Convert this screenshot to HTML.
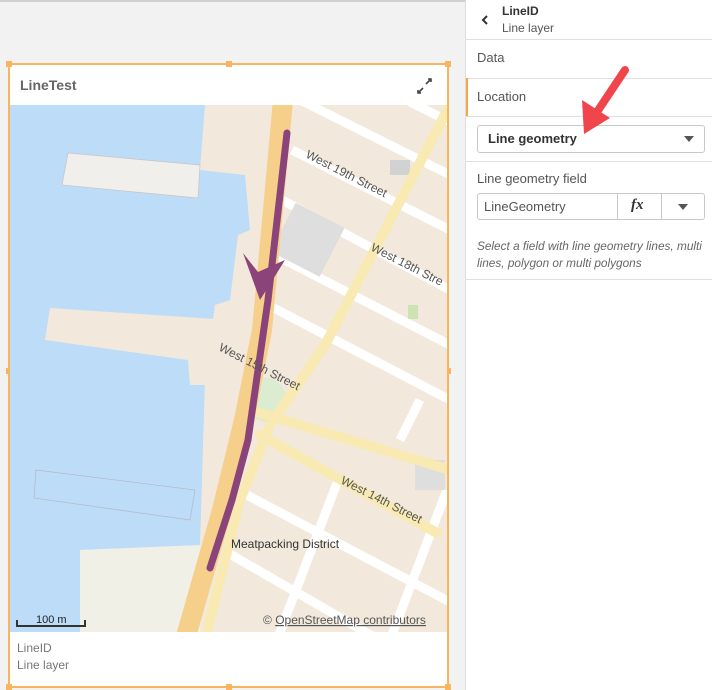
<!DOCTYPE html>
<html><head><style>
*{margin:0;padding:0;box-sizing:border-box}
body{width:712px;height:690px;background:#f2f2f2;font-family:"Liberation Sans",sans-serif;position:relative;overflow:hidden}
.abs{position:absolute}
.panel{left:465px;top:0;width:247px;height:690px;background:#fff;border-left:1px solid #ddd}
.t{position:absolute;font-size:13px;color:#404040}
.hr{position:absolute;left:0;width:247px;height:1px;background:#e0e0e0}
</style></head><body>
<div class="abs" style="left:0;top:0;width:712px;height:2px;background:#d0d0d0"></div>
<div class="abs" style="left:8px;top:63px;width:441px;height:625px;border:2px solid #f9b45e;background:#fff"></div>
<div class="abs" style="left:6px;top:61px;width:6px;height:6px;background:#f9b45e"></div>
<div class="abs" style="left:226px;top:61px;width:6px;height:6px;background:#f9b45e"></div>
<div class="abs" style="left:445px;top:61px;width:6px;height:6px;background:#f9b45e"></div>
<div class="abs" style="left:6px;top:368px;width:6px;height:6px;background:#f9b45e"></div>
<div class="abs" style="left:445px;top:368px;width:6px;height:6px;background:#f9b45e"></div>
<div class="abs" style="left:6px;top:684px;width:6px;height:6px;background:#f9b45e"></div>
<div class="abs" style="left:226px;top:684px;width:6px;height:6px;background:#f9b45e"></div>
<div class="abs" style="left:445px;top:684px;width:6px;height:6px;background:#f9b45e"></div>
<div class="abs" style="left:20px;top:77px;font-size:14px;font-weight:bold;color:#666">LineTest</div>
<svg class="abs" style="left:415px;top:77px" width="20" height="18"><path d="M11 7l5-5M13 2h3v3M8 11l-5 5M3 13v3h3" stroke="#444" stroke-width="1.6" fill="none"/></svg>
<svg class="abs" style="left:0;top:0" width="712" height="690">
<defs><clipPath id="c"><rect x="10" y="105" width="437" height="527"/></clipPath></defs>
<g clip-path="url(#c)">
<rect x="10" y="105" width="437" height="527" fill="#f2e9dc"/>
<polygon points="10,105 205,105 200,170 245,175 250,230 238,235 230,300 215,305 205,380 200,545 80,550 80,632 10,632" fill="#bcdcf7"/>
<polygon points="68,153 200,165 198,198 62,185" fill="#f1efeb" stroke="#c9c3c6" stroke-width="0.7"/>
<polygon points="50,308 230,320 215,385 190,385 188,360 45,340" fill="#f2e9dc"/>
<polygon points="36,470 195,490 190,520 34,498" fill="none" stroke="#b9b4c6" stroke-width="0.7"/>
<polygon points="80,550 205,545 200,632 80,632" fill="#f1f0e6"/>
<g stroke="#fff" stroke-width="9" fill="none">
<line x1="300" y1="100" x2="450" y2="175"/>
<line x1="292" y1="150" x2="450" y2="230"/>
<line x1="282" y1="200" x2="450" y2="290"/>
<line x1="275" y1="255" x2="450" y2="345"/>
<line x1="268" y1="305" x2="450" y2="400"/>
<line x1="410" y1="102" x2="450" y2="122"/>
<line x1="243" y1="493" x2="450" y2="602"/>
<line x1="228" y1="553" x2="440" y2="675"/>
<line x1="337" y1="483" x2="277" y2="640"/>
<line x1="447" y1="490" x2="390" y2="640"/>
<line x1="420" y1="400" x2="400" y2="440"/>
</g>
<rect x="280" y="212" width="55" height="55" fill="#dedede" transform="rotate(27 307 240)"/>
<rect x="390" y="160" width="20" height="15" fill="#d2d2d2"/>
<rect x="415" y="460" width="30" height="30" fill="#dedede"/>
<ellipse cx="266" cy="400" rx="20" ry="22" fill="#dcecd0"/>
<rect x="408" y="305" width="10" height="14" fill="#cde3b4"/>
<g stroke="#f8eab2" stroke-width="10" fill="none" stroke-linecap="round">
<polyline points="450,105 325,345 270,425 240,500 205,640"/>
<line x1="250" y1="410" x2="450" y2="470"/>
<line x1="260" y1="435" x2="437" y2="533"/>
</g>
<polyline points="283,100 262,330 244,420 222,510 185,640" stroke="#f6cf8a" stroke-width="20" fill="none"/>
<polyline points="287,133 268,300 248,440 232,500 210,568" stroke="#8b4479" stroke-width="7" fill="none" stroke-linecap="round" stroke-linejoin="round"/>
<polygon points="243,253 258,272 285,260 260,300" fill="#8b4479"/>
<g font-size="12" fill="#555">
<text x="305" y="157" transform="rotate(27 305 157)">West 19th Street</text>
<text x="370" y="250" transform="rotate(27 370 250)">West 18th Stre</text>
<text x="218" y="350" transform="rotate(27 218 350)">West 15th Street</text>
<text x="340" y="483" transform="rotate(27 340 483)">West 14th Street</text>
<text x="231" y="548" fill="#333">Meatpacking District</text>
<text x="263" y="624">© <tspan text-decoration="underline">OpenStreetMap contributors</tspan></text>
<text x="36" y="623" fill="#222" font-size="11">100 m</text>
</g>
<path d="M17 620v6h68v-6" stroke="#333" stroke-width="2" fill="none"/>
</g>
</svg>
<div class="abs" style="left:17px;top:640px;font-size:12px;color:#777;line-height:17px">LineID<br>Line layer</div>
<div class="abs panel">
<svg class="abs" style="left:14px;top:14px" width="10" height="12"><path d="M7 2L3 6l4 4" stroke="#333" stroke-width="2" fill="none"/></svg>
<div class="t" style="left:36px;top:4px;font-weight:bold;color:#333;font-size:12px">LineID</div>
<div class="t" style="left:36px;top:21px;color:#555;font-size:12px">Line layer</div>
<div class="hr" style="top:39px"></div>
<div class="t" style="left:11px;top:50px;color:#555">Data</div>
<div class="hr" style="top:78px"></div>
<div class="abs" style="left:0;top:78px;width:2px;height:38px;background:#f8a342"></div>
<div class="t" style="left:11px;top:89px;color:#555">Location</div>
<div class="hr" style="top:116px"></div>
<div class="abs" style="left:11px;top:125px;width:228px;height:28px;border:1px solid #c8c8c8;border-radius:3px"></div>
<div class="t" style="left:22px;top:131px;font-weight:bold;color:#333">Line geometry</div>
<svg class="abs" style="left:217px;top:135px" width="12" height="8"><path d="M1 1h10l-5 6z" fill="#555"/></svg>
<div class="hr" style="top:161px"></div>
<div class="t" style="left:11px;top:171px;color:#555">Line geometry field</div>
<div class="abs" style="left:11px;top:193px;width:228px;height:27px;border:1px solid #c8c8c8;border-radius:3px"></div>
<div class="abs" style="left:151px;top:193px;width:1px;height:27px;background:#c8c8c8"></div>
<div class="abs" style="left:195px;top:193px;width:1px;height:27px;background:#c8c8c8"></div>
<div class="t" style="left:18px;top:199px;color:#555">LineGeometry</div>
<div class="abs" style="left:165px;top:197px;font-family:'Liberation Serif',serif;font-style:italic;font-weight:bold;font-size:15px;color:#333">fx</div>
<svg class="abs" style="left:211px;top:203px" width="12" height="8"><path d="M1 1h10l-5 6z" fill="#555"/></svg>
<div class="abs" style="left:11px;top:238px;font-size:11.8px;font-style:italic;color:#666;line-height:17px;white-space:nowrap">Select a field with line geometry lines, multi<br>lines, polygon or multi polygons</div>
<div class="hr" style="top:279px"></div>
</div>
<svg class="abs" style="left:570px;top:60px" width="70" height="90"><path d="M55 10L25 55" stroke="#f0454a" stroke-width="8" stroke-linecap="round"/><polygon points="14,74 12,40 40,58" fill="#f0454a"/></svg>
</body></html>
